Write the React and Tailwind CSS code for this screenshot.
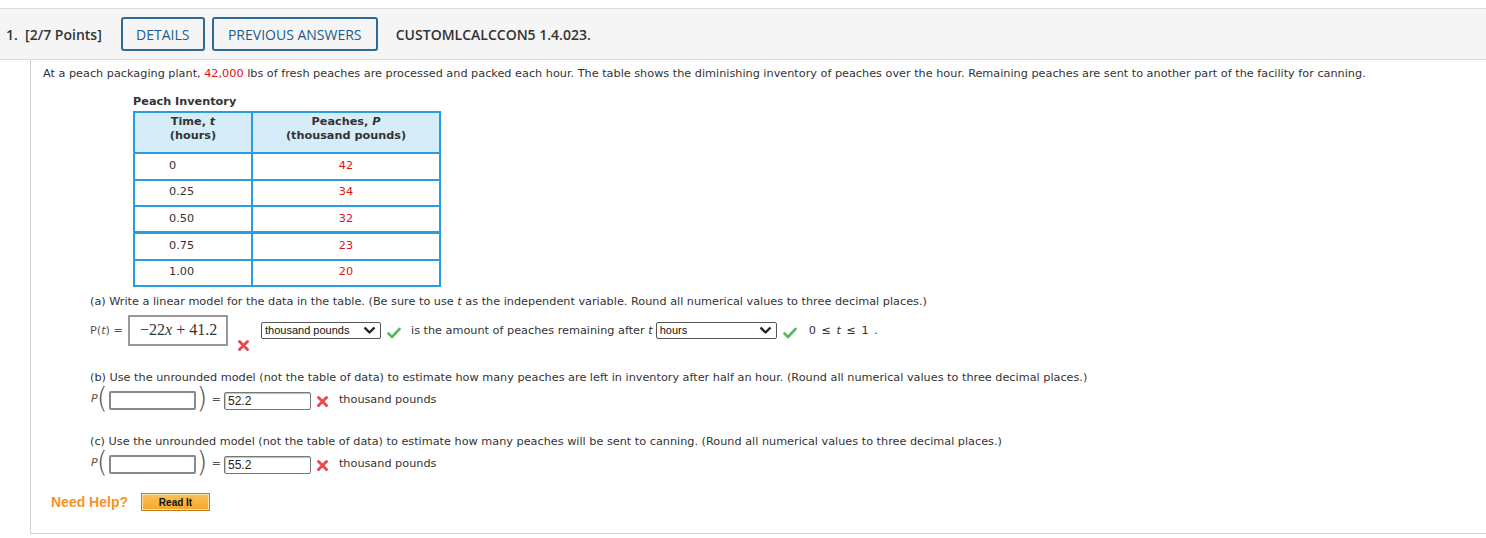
import React from "react";

const ROWS = [
  ["0", "42"],
  ["0.25", "34"],
  ["0.50", "32"],
  ["0.75", "23"],
  ["1.00", "20"],
];

function Check() {
  return (
    <svg width="14" height="12" viewBox="0 0 14 12" className="inline-block">
      <path d="M1.5 6.5 L5 10 L12.5 2" fill="none" stroke="#5cb85c" strokeWidth="2.6" strokeLinecap="round" strokeLinejoin="round" />
    </svg>
  );
}

function Cross() {
  return (
    <svg width="13" height="13" viewBox="0 0 13 13" className="inline-block">
      <path d="M2.5 2.5 L10.5 10.5 M10.5 2.5 L2.5 10.5" fill="none" stroke="#e8484f" strokeWidth="3" strokeLinecap="round" />
    </svg>
  );
}

function Chevron() {
  return (
    <svg width="13" height="9" viewBox="0 0 13 9">
      <path d="M1.5 1.5 L6.5 6.5 L11.5 1.5" fill="none" stroke="#222" strokeWidth="2.4" strokeLinejoin="round" />
    </svg>
  );
}

function Select({ label, width }) {
  return (
    <span
      className={`inline-flex items-center justify-between h-[17px] border border-[#555] rounded-[2px] pl-[3px] pr-[4px] bg-white text-[11px] text-[#111] ${width}`}
      style={{ fontFamily: "'Liberation Sans', Arial, sans-serif" }}
    >
      <span>{label}</span>
      <Chevron />
    </span>
  );
}

function EvalLine({ value }) {
  return (
    <div className="flex items-center ml-[60px] mt-[4px] h-[24px]">
      <span className="italic text-[#555] text-[11px] mt-[-4px]">P</span>
      <span
        className="text-[#555] text-[28px] leading-none font-light -ml-[1px] mr-[1px] -mt-[3px]"
        style={{ fontFamily: "'DejaVu Sans', sans-serif" }}
      >
        (
      </span>
      <span className="w-[87px] h-[19px] border-2 border-[#888] rounded-[2px] bg-white" />
      <span
        className="text-[#555] text-[28px] leading-none font-light ml-[1px] -mt-[3px]"
        style={{ fontFamily: "'DejaVu Sans', sans-serif" }}
      >
        )
      </span>
      <span className="ml-[4px] text-[#555]">=</span>
      <span
        className="ml-[3px] w-[87px] h-[18px] border border-[#777] rounded-[2px] bg-white text-[12px] text-[#222] pl-[3px] leading-[16px] shadow-[inset_1px_1px_1px_rgba(0,0,0,0.25)]"
        style={{ fontFamily: "'Liberation Sans', Arial, sans-serif" }}
      >
        {value}
      </span>
      <span className="ml-[5px] mt-[2px]"><Cross /></span>
      <span className="ml-[10px]">thousand pounds</span>
    </div>
  );
}

export default function App() {
  return (
    <div className="w-[1486px] h-[538px] bg-white text-[#333] overflow-hidden">
      <div className="h-[8px]" />
      {/* Header */}
      <div
        className="h-[52px] bg-[#f5f5f5] border-y border-[#dcdcdc] flex items-center text-[14px]"
        style={{ fontFamily: "'Open Sans', 'Noto Sans', sans-serif" }}
      >
        <span className="ml-[6px] font-semibold text-[#333]">1.&nbsp; [2/7 Points]</span>
        <button className="ml-[19px] h-[34px] w-[84px] border-2 border-[#2c6a98] rounded-[3px] text-[#1c5c8c]">
          DETAILS
        </button>
        <button className="ml-[7px] h-[34px] w-[166px] border-2 border-[#2c6a98] rounded-[3px] text-[#1c5c8c]">
          PREVIOUS ANSWERS
        </button>
        <span className="ml-[18px] font-semibold text-[#333]">CUSTOMLCALCCON5 1.4.023.</span>
      </div>

      {/* Body */}
      <div
        className="ml-[30px] h-[474px] border-l border-b border-[#cfcfcf] text-[11.25px] text-[#333]"
        style={{ fontFamily: "'DejaVu Sans', Verdana, sans-serif" }}
      >
        <p className="pl-[12px] pt-[7px] leading-[14px]">
          At a peach packaging plant, <span className="text-[#e01010]">42,000</span> lbs of fresh peaches are processed
          and packed each hour. The table shows the diminishing inventory of peaches over the hour. Remaining peaches
          are sent to another part of the facility for canning.
        </p>

        <div className="ml-[102px] mt-[14px]">
          <div className="font-bold text-[#333] leading-[14px]">Peach Inventory</div>
          <table className="mt-[2px] border-collapse border-2 border-[#2a9de0] w-[308px]">
            <thead>
              <tr className="bg-[#d6ecf8] h-[41px]">
                <th className="border-2 border-[#2a9de0] w-[118px] font-bold leading-[14px] pt-[2px] align-top">
                  Time, <i>t</i>
                  <br />(hours)
                </th>
                <th className="border-2 border-[#2a9de0] font-bold leading-[14px] pt-[2px] align-top">
                  Peaches, <i>P</i>
                  <br />(thousand pounds)
                </th>
              </tr>
            </thead>
            <tbody>
              {ROWS.map(([t, p], i) => (
                <tr key={t} className={i === 3 ? "h-[27px] border-t-[3px] border-[#2a9de0]" : "h-[26.5px]"}>
                  <td className="border-2 border-[#2a9de0] pl-[34px]">{t}</td>
                  <td className="border-2 border-[#2a9de0] text-center text-[#e01010]">{p}</td>
                </tr>
              ))}
            </tbody>
          </table>
        </div>

        {/* (a) */}
        <div className="ml-[59px] mt-[8px] leading-[14px]">
          (a) Write a linear model for the data in the table. (Be sure to use <i>t</i> as the independent variable.
          Round all numerical values to three decimal places.)
        </div>
        <div className="flex items-start ml-[59px] mt-[6px]">
          <span className="text-[#555] mt-[8px]">
            P(<i>t</i>) =
          </span>
          <span
            className="ml-[5px] w-[100px] h-[31px] border-2 border-[#999] bg-white text-[16px] text-[#333] pl-[10px] leading-[26px]"
            style={{ fontFamily: "'Liberation Serif', 'DejaVu Serif', serif" }}
          >
            −22<i>x</i> + 41.2
          </span>
          <span className="ml-[9px] mt-[22px]"><Cross /></span>
          <span className="ml-[11px] mt-[7px]"><Select label="thousand pounds" width="w-[120px]" /></span>
          <span className="ml-[6px] mt-[10px]"><Check /></span>
          <span className="ml-[10px] mt-[8px]">
            is the amount of peaches remaining after <i>t</i>
          </span>
          <span className="ml-[3px] mt-[7px]"><Select label="hours" width="w-[121px]" /></span>
          <span className="ml-[6px] mt-[10px]"><Check /></span>
          <span className="ml-[12px] mt-[8px] tracking-[1px]">
            0 ≤ <i>t</i> ≤ 1 .
          </span>
        </div>

        {/* (b) */}
        <div className="ml-[59px] mt-[17px] leading-[14px]">
          (b) Use the unrounded model (not the table of data) to estimate how many peaches are left in inventory after
          half an hour. (Round all numerical values to three decimal places.)
        </div>
        <EvalLine value="52.2" />

        {/* (c) */}
        <div className="ml-[59px] mt-[22px] leading-[14px]">
          (c) Use the unrounded model (not the table of data) to estimate how many peaches will be sent to canning.
          (Round all numerical values to three decimal places.)
        </div>
        <EvalLine value="55.2" />

        {/* Need help */}
        <div className="flex items-center ml-[20px] mt-[15px]">
          <span
            className="text-[#f7941d] font-bold text-[14px]"
            style={{ fontFamily: "'Liberation Sans', Arial, sans-serif" }}
          >
            Need Help?
          </span>
          <span
            className="ml-[13px] w-[69px] h-[18px] border border-[#c77a1a] bg-gradient-to-b from-[#fbc25a] to-[#f5a623] flex items-center justify-center text-[10px] font-bold text-[#111] shadow-[inset_0_0_0_1px_#fde2a8]"
            style={{ fontFamily: "'Liberation Sans', Arial, sans-serif" }}
          >
            Read It
          </span>
        </div>
      </div>
    </div>
  );
}
